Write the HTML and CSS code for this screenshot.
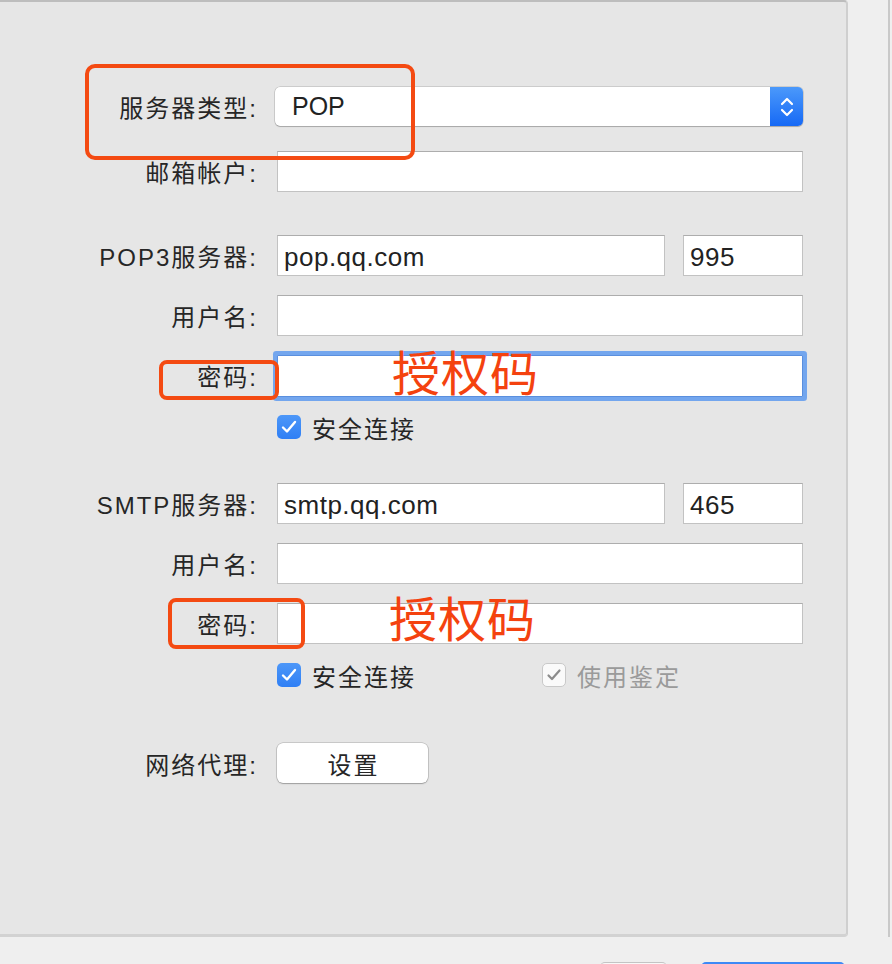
FILE: index.html
```html
<!DOCTYPE html>
<html lang="zh-CN">
<head>
<meta charset="utf-8">
<title>邮箱设置</title>
<link rel="stylesheet" href="styles.css">
</head>
<body>
<div class="window">
  <div class="main">
    <div class="panel">
      <form class="form">
        <div class="row row-select">
          <label class="lbl">服务器类型:</label>
          <div class="select">
            <span class="select-text">POP</span>
            <span class="stepper">
              <svg width="16" height="24" viewBox="0 0 16 24"><path d="M3 9 L8 4 L13 9" fill="none" stroke="#fff" stroke-width="2.2" stroke-linecap="round" stroke-linejoin="round"/><path d="M3 15 L8 20 L13 15" fill="none" stroke="#fff" stroke-width="2.2" stroke-linecap="round" stroke-linejoin="round"/></svg>
            </span>
          </div>
        </div>
        <div class="row row-account">
          <label class="lbl">邮箱帐户:</label>
          <div class="input full"></div>
        </div>

        <div class="row row-server">
          <label class="lbl">POP3服务器:</label>
          <div class="input server">pop.qq.com</div>
          <div class="input port">995</div>
        </div>
        <div class="row">
          <label class="lbl">用户名:</label>
          <div class="input full"></div>
        </div>
        <div class="row">
          <label class="lbl">密码:</label>
          <div class="input full focused"></div>
        </div>
        <div class="row check-row">
          <span class="lbl"></span>
          <span class="check on"><svg width="16" height="14" viewBox="0 0 16 14"><path d="M2 7.5 L6 11.5 L14 2" fill="none" stroke="#fff" stroke-width="2.4" stroke-linecap="round" stroke-linejoin="round"/></svg></span>
          <span class="check-text">安全连接</span>
        </div>

        <div class="row row-server smtp">
          <label class="lbl">SMTP服务器:</label>
          <div class="input server">smtp.qq.com</div>
          <div class="input port">465</div>
        </div>
        <div class="row">
          <label class="lbl">用户名:</label>
          <div class="input full"></div>
        </div>
        <div class="row">
          <label class="lbl">密码:</label>
          <div class="input full"></div>
        </div>
        <div class="row check-row">
          <span class="lbl"></span>
          <span class="check on"><svg width="16" height="14" viewBox="0 0 16 14"><path d="M2 7.5 L6 11.5 L14 2" fill="none" stroke="#fff" stroke-width="2.4" stroke-linecap="round" stroke-linejoin="round"/></svg></span>
          <span class="check-text">安全连接</span>
          <span class="check off"><svg width="16" height="14" viewBox="0 0 16 14"><path d="M2.5 7.5 L6 11 L13.5 2.5" fill="none" stroke="#8c8c8c" stroke-width="2.2" stroke-linecap="round" stroke-linejoin="round"/></svg></span>
          <span class="check-text disabled">使用鉴定</span>
        </div>

        <div class="row row-proxy">
          <label class="lbl">网络代理:</label>
          <button type="button" class="btn">设置</button>
        </div>
      </form>

      <div class="mark mark-type"></div>
      <div class="mark mark-pw1"></div>
      <div class="mark mark-pw2"></div>
      <div class="note note1">授权码</div>
      <div class="note note2">授权码</div>
    </div>
    <div class="side"></div>
  </div>
  <div class="footer">
    <span class="fbtn gray"></span>
    <span class="fbtn blue"></span>
  </div>
</div>
</body>
</html>
```

FILE: styles.css
```css
html, body {
  margin: 0;
  padding: 0;
}
body {
  width: 892px;
  height: 964px;
  overflow: hidden;
  background: #efefef;
  font-family: "Liberation Sans", "Noto Sans CJK SC", sans-serif;
  color: #262626;
}
.window {
  display: flex;
  flex-direction: column;
  width: 892px;
  height: 964px;
}
.main {
  display: flex;
  height: 937px;
}
.panel {
  position: relative;
  box-sizing: border-box;
  width: 848px;
  height: 937px;
  background: #e6e6e6;
  border-top: 2px solid #bdbdbd;
  border-right: 2px solid #cfcfcf;
  border-bottom: 3px solid #d2d2d2;
  border-radius: 0 4px 4px 0;
}
.side {
  width: 40px;
  border-right: 2px solid #c9c9c9;
}
.footer {
  position: relative;
  flex: 1;
}
.fbtn {
  position: absolute;
  top: 25px;
  height: 10px;
  border-radius: 5px 5px 0 0;
}
.fbtn.gray {
  left: 600px;
  width: 67px;
  border-top: 1px solid #c4c4c4;
  background: #f8f8f8;
}
.fbtn.blue {
  left: 701px;
  width: 144px;
  background: #3d89f6;
}

.form {
  display: flex;
  flex-direction: column;
  padding-top: 85px;
}
.row {
  display: flex;
  align-items: center;
  height: 41px;
  margin-top: 19px;
}
.row-select {
  margin-top: 0;
  height: 39px;
}
.row-account {
  margin-top: 25px;
}
.row-server {
  margin-top: 43px;
}
.row-server.smtp {
  margin-top: 44px;
}
.check-row {
  height: 24px;
  margin-top: 19px;
}
.row-proxy {
  margin-top: 56px;
  height: 40px;
}
.lbl {
  box-sizing: border-box;
  width: 275px;
  flex: none;
  padding-right: 17px;
  text-align: right;
  font-size: 24px;
  color: #262626;
  letter-spacing: 2px;
}
.input {
  box-sizing: border-box;
  height: 41px;
  margin-left: 2px;
  background: #fff;
  border: 1px solid #c2c2c2;
  border-top-color: #adadad;
  padding: 3px 6px 0;
  font-size: 26px;
  line-height: 36px;
  letter-spacing: 0.5px;
  color: #222;
}
.input.full {
  width: 526px;
}
.input.server {
  width: 388px;
}
.input.port {
  width: 120px;
  margin-left: 18px;
}
.input.focused {
  border-color: #5a8fde;
  box-shadow: 0 0 0 4px #73a6ee;
  border-radius: 1px;
  height: 42px;
}
.select {
  box-sizing: border-box;
  display: flex;
  align-items: center;
  width: 528px;
  height: 39px;
  background: #fff;
  border-radius: 5px;
  box-shadow: 0 0 0 0.5px rgba(0,0,0,0.22), 0 1px 1px rgba(0,0,0,0.18);
  overflow: hidden;
}
.select-text {
  flex: 1;
  padding-left: 17px;
  font-size: 25px;
  color: #222;
}
.stepper {
  display: flex;
  align-items: center;
  justify-content: center;
  width: 33px;
  height: 39px;
  background: linear-gradient(#4b99fb, #1669f5);
}
.check {
  box-sizing: border-box;
  display: flex;
  align-items: center;
  justify-content: center;
  width: 24px;
  height: 24px;
  border-radius: 5px;
  margin-left: 2px;
  flex: none;
}
.check.on {
  background: linear-gradient(#4d97f8, #2f7ff5);
}
.check.off {
  background: #fafafa;
  border: 1px solid #c9c9c9;
  margin-left: 126px;
}
.check-text {
  margin-left: 11px;
  font-size: 24px;
  letter-spacing: 2px;
  color: #262626;
}
.check-text.disabled {
  color: #9a9a9a;
}
.btn {
  box-sizing: border-box;
  width: 151px;
  height: 40px;
  margin-left: 2px;
  background: #fff;
  border: none;
  border-radius: 6px;
  box-shadow: 0 0 0 0.5px rgba(0,0,0,0.25), 0 1px 1.5px rgba(0,0,0,0.22);
  font-family: "Liberation Sans", "Noto Sans CJK SC", sans-serif;
  font-size: 24px;
  letter-spacing: 2px;
  color: #262626;
  padding: 0 0 0 2px;
}

.mark {
  position: absolute;
  box-sizing: border-box;
  border: 4px solid #f44a12;
  border-radius: 10px;
}
.mark-type {
  left: 85px;
  top: 62px;
  width: 330px;
  height: 96px;
}
.mark-pw1 {
  left: 159px;
  top: 358px;
  width: 120px;
  height: 40px;
  border-radius: 8px;
}
.mark-pw2 {
  left: 168px;
  top: 596px;
  width: 137px;
  height: 51px;
  border-radius: 8px;
}
.note {
  position: absolute;
  font-family: "Noto Sans CJK SC", sans-serif;
  font-size: 48px;
  line-height: 1;
  color: #f4420f;
  letter-spacing: 1px;
}
.note1 {
  left: 392px;
  top: 344px;
}
.note2 {
  left: 389px;
  top: 590px;
}
```
